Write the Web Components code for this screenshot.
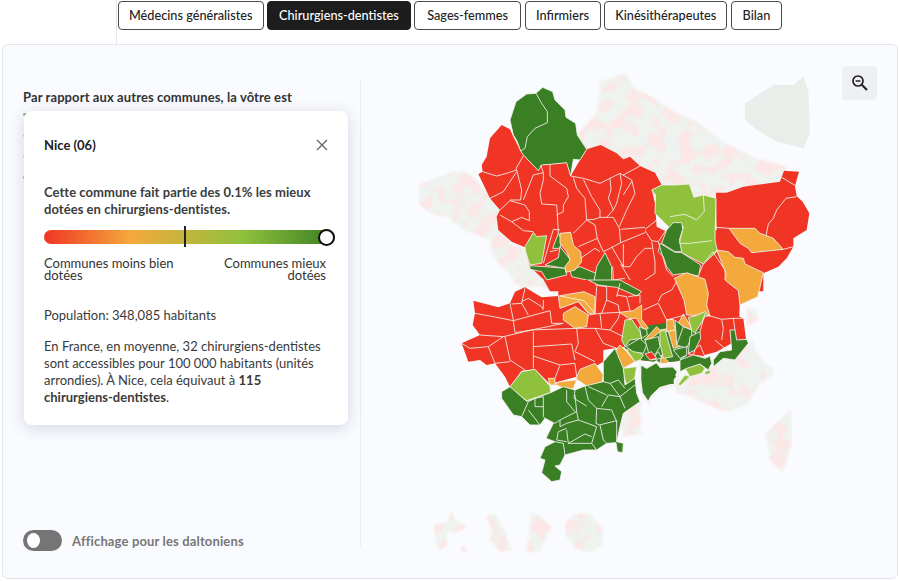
<!DOCTYPE html>
<html lang="fr"><head><meta charset="utf-8"><title>Carte</title>
<style>
html,body{margin:0;padding:0;background:#fff}
body{width:900px;height:581px;overflow:hidden;font-family:"Lato","Liberation Sans",sans-serif;color:#333}
</style></head>
<body>
<x-app></x-app>
<script>
const R='#f03524',D='#3a7f24',L='#90c13c',O='#f4a93c',W='#f1f1ee';
const upper={
 R:["275,165 300,178 310,200 332,243 340,255 385,302 395,285 470,278 482,318 510,270 530,238 572,225 620,250 640,268 660,260 690,288 735,308 755,345 725,360 735,400 740,470 800,500 920,480 918,368 950,368 1000,350 1110,335 1122,302 1167,305 1155,348 1160,378 1178,395 1198,430 1190,480 1150,505 1150,530 1130,565 1105,590 1060,610 1060,664 420,664 400,628 360,590 345,532 305,515 265,480 260,440 270,420 240,385 205,312 218,305 215,285 230,260 240,205"],
 L:["725,360 755,345 800,345 838,342 852,382 880,375 918,385 915,510 922,543 880,582 815,548 808,520 820,470 790,462 780,475 750,445 735,430 737,375","370,487 380,500 410,497 395,580 360,585 347,545 345,530"],
 D:["378,70 398,52 428,65 435,90 465,120 468,142 497,160 502,195 530,238 510,270 490,268 482,318 470,278 420,283 395,285 385,302 340,255 332,243 322,215 310,195 300,150 318,95 350,72","790,458 815,458 818,478 808,510 815,545 795,545 755,520 770,480","750,520 795,547 815,548 872,585 866,618 820,610 790,615 770,590 760,560 745,545","428,535 445,490 455,510 450,535","405,585 445,563 450,530 482,570 465,595","360,587 405,590 465,595 470,615 410,630 395,605 360,598","480,600 510,590 558,610 552,635 485,620","585,548 605,590 605,635 552,635 560,590"],
 O:["450,490 482,487 490,525 512,545 515,575 495,600 468,607 465,590 480,570 470,545 450,520","957,475 1035,475 1050,490 1090,505 1120,538 1025,548 1015,535 990,520"],
 lines:["378,70 395,100 412,125 412,158 375,175 352,200 345,235 332,243","780,440 825,433 860,450 883,425 880,375","808,520 840,520 905,512","1115,322 1158,348","1128,385 1160,380","1128,385 1100,420 1090,445 1075,462 1068,498","918,472 957,475","1120,538 1150,530","922,543 905,550 880,582 868,610","908,545 945,600 946,630 895,660",
 "218,305 260,318 290,310 320,300","340,258 318,295 320,300 335,360 332,390 300,390","240,385 280,365 320,305","270,420 300,392 345,405 358,425 358,452 335,442 305,455 270,435","305,455 340,482 370,485","340,390 360,340 370,315 400,308 400,330 390,370 395,402 440,405 442,432 445,490","420,283 420,318 470,355 475,380 460,405 460,425 440,435","392,285 400,308","482,318 520,325 570,340 600,325 630,310 665,330 675,370 650,420 628,470","490,322 500,355 525,385 530,450","520,328 545,380 570,420 570,442","600,325 603,360 595,385 610,420 590,442","630,310 635,340 620,400 610,420","640,315 690,288","665,335 640,375","490,490 530,450 555,465 562,505 505,530","530,450 552,448 570,442 610,442 628,475 632,518 600,535 580,545","562,505 580,545","512,565 555,535 570,545","632,478 705,472","705,478 738,452 767,482 745,515 725,512 705,482","632,518 705,488","605,530 640,590 660,590 680,560 705,535 725,535","640,522 640,590","725,515 735,575","632,582 660,630 690,640 735,610 735,575","745,515 770,600 790,620","690,640 685,660","608,590 610,630 645,625","450,480 430,478 400,580","443,540 420,545"]
};
const lower={
 R:["40,62 115,82 150,70 165,35 195,22 245,52 295,48 295,20 260,0 860,0 840,30 838,110 850,115 858,178 815,190 770,215 680,240 610,248 540,240 495,200 430,210 430,245 350,290 270,312 225,268 185,272 150,320 135,290 105,250 80,255 60,240 25,245 5,190 60,165 38,135 45,100"],
 B:["640,125 720,150 715,190 685,222 680,240 610,248 540,240 495,205 485,185 540,140"],
 X:["685,222 720,195 735,230 700,225"],
 O:["770,-90 805,-85 825,-68 850,-65 855,-48 910,-22 905,0 893,50 840,75 835,32 795,0 798,-20","643,-5 680,-22 735,-2 745,40 740,75 750,108 680,105 672,60","295,48 372,35 405,50 405,100 385,100 365,75 355,65 300,85","310,100 345,80 385,105 380,140 345,145 310,120","350,292 360,268 405,250 430,285 425,315 380,318 350,298","265,295 285,295 285,312 300,305 350,300 340,325 320,330 290,315 270,315","478,97 520,92 545,75 545,118 565,145 550,150 530,115 505,115","553,180 590,140 600,150 630,145 620,155 600,155 575,175","620,120 640,118 645,150 620,155","625,155 645,150 660,200 640,205","655,130 670,102 690,135 695,150 672,140","465,215 480,195 500,215 525,245 490,265","600,250 605,225 625,245 620,250"],
 L:["150,320 185,275 225,268 270,318 272,338 200,362 152,325","495,120 515,118 540,155 545,175 510,180 495,200 485,180","500,210 515,200 550,225 540,240 525,245","600,155 615,150 638,230 610,235 600,190","490,265 530,260 525,290 515,315 500,315 492,290","685,112 705,108 735,95 745,105 735,110 705,160 695,150","675,265 720,252 735,265 725,280 690,290","655,312 675,285 690,290 660,318","735,275 750,270 752,280 735,285"],
 D:["385,0 480,0 545,35 530,48 470,22 415,15","125,335 150,320 200,364 272,338 310,320 345,330 375,318 430,305 430,245 465,205 490,265 495,315 525,295 530,340 540,365 490,400 480,440 470,485 490,490 488,518 472,515 468,488 440,490 410,510 370,510 315,525 300,555 285,558 305,575 300,600 275,605 245,578 255,540 240,535 255,500 285,485 258,475 280,430 255,415 240,435 210,435 185,410 160,405 125,355","645,120 670,140 695,150 695,170 680,205 650,195 648,160","690,170 720,155 722,175 705,210 685,220","640,210 680,200 680,225 660,235","660,240 700,225 735,235 750,228 755,250 745,270 720,252 680,265 660,275","760,240 780,215 815,210 810,150 825,150 830,180 860,178 865,190 825,240 790,235 760,260","538,140 560,150 562,165 545,175","498,200 540,175 560,195 550,220 520,215","555,180 595,170 600,200 575,240 565,215","575,240 595,215 605,235"],
 lines:["150,70 160,120","45,100 100,110 160,122 270,92","155,72 185,70 205,105","185,65 205,55 245,80 250,90","195,25 185,70","250,60 250,85","270,92 275,130 310,130","160,122 165,158 215,150 310,130","5,190 30,205 85,200 130,170 60,165","130,170 215,150 350,145 355,190 345,215","135,170 150,240 195,270","85,200 95,225 105,250 150,245","220,155 220,265","220,200 335,192 345,240","220,228 300,255 345,250","300,255 285,295","345,215 405,245","345,250 350,290","405,145 430,190 470,205","350,145 405,145 450,150 490,170","450,150 475,115 480,95","385,105 420,100 425,145","420,100 478,97","405,15 440,20","410,20 405,100","440,20 440,60 425,100","440,60 475,75 478,97","470,45 500,50 510,92","470,50 480,10","505,50 540,45 540,70","550,90 595,70 620,120 675,105","595,65 605,45 635,30 650,5","735,100 720,155","740,105 785,118 820,115 850,115","785,118 790,145 785,180","820,115 825,150","765,180 800,210","300,48 372,62 405,100","355,65 385,100",
 "205,365 185,410","205,365 225,355 250,350","225,355 225,380 250,380","205,390 240,435","250,350 250,410 255,415 285,430","285,430 300,420 350,395 345,345","320,330 320,365 345,395","345,330 342,355 380,378","375,318 385,360 410,385","350,395 355,420 410,440","410,385 408,430 418,435 470,422","410,385 455,390 470,425","425,380 445,345","385,320 440,345","430,305 450,310 480,350","450,310 475,300 495,325","445,345 480,350 495,385","480,350 525,315","300,420 300,440 320,430 355,420","320,445 295,455 290,480 320,485","320,450 325,490 375,462 395,470","325,490 395,490 410,510","395,490 410,440","420,435 430,480 440,490","285,485 310,490 315,525","470,422 470,485","670,140 650,195","660,240 680,225","700,225 705,210"]
};
const colors={R,D,L,O,B:D,X:R};
const poly=(a,f,s)=>a.map(p=>`<polygon points="${p}" fill="${f}"${s?` stroke="${W}" stroke-width="${s}" stroke-linejoin="round"`:''}/>`).join('');
const group=(g,order)=>order.map(k=>poly(g[k],colors[k],(k=='R'||k=='B')?0:2.6)).join('')+g.lines.map(p=>`<polyline points="${p}" fill="none" stroke="${W}" stroke-width="2.6" stroke-linejoin="round"/>`).join('');
const pale5=["570,35 650,8 670,50 740,90 790,125 850,150 950,220 1040,265 1130,290 1115,345 1000,400 800,420 600,300 530,260 502,195 560,130 565,90","25,345 130,305 170,305 215,345 300,400 300,520 345,535 400,590 420,640 340,660 250,560 240,510 160,480 110,440 70,435 30,405"];
const alsace="1005,100 1090,45 1150,45 1180,20 1195,60 1200,190 1180,235 1100,215 1040,180 1005,150";
const pale6=["860,80 890,90 895,120 860,140","860,190 880,180 885,210 920,255 940,265 940,285 900,310 860,375 810,395 780,390 680,345 650,340 640,300 750,240 830,220","490,400 545,360 540,450 550,460 490,470 480,440","985,395 995,395 995,490 970,580 930,540 915,460","150,5 200,0 260,0 295,40 240,20 190,18"];
const paleO=["434,525 447,522 452,512 455,520 467,527 455,533 447,532 447,545 440,550 436,545","461,548 465,546 467,551 462,553","486,516 495,514 502,525 508,540 512,550 500,552 495,545 490,540 492,530","530,512 540,516 552,527 545,540 540,552 526,552 530,530","566,522 575,514 590,513 603,530 602,545 590,553 575,548 565,535"];

class XApp extends HTMLElement{constructor(){super();this.attachShadow({mode:'open'}).innerHTML=`
<style>:host{display:block;width:900px;height:581px}
header{display:grid;grid-template-columns:116px 1px 1fr;height:44px}
.rule{background:#e6e7ea}
x-tabs{margin:1px 0 0 1px}
x-panel{margin:0 2px}
</style>
<header><span></span><span class="rule"></span><x-tabs></x-tabs></header>
<x-panel></x-panel>`}}

class XTabs extends HTMLElement{constructor(){super();const t=[["Médecins généralistes",145.5],["Chirurgiens-dentistes",143.5],["Sages-femmes",106.5],["Infirmiers",76],["Kinésithérapeutes",123],["Bilan",51]];
this.attachShadow({mode:'open'}).innerHTML=`
<style>:host{display:flex;gap:3.7px;align-items:flex-start}
button{all:unset;box-sizing:border-box;height:29px;padding-bottom:1px;display:flex;align-items:center;justify-content:center;border:1px solid #4a4a4a;border-radius:4px;background:#fff;color:#222;font:500 12.7px Lato,"Liberation Sans",sans-serif;white-space:nowrap}
.on{background:#1d1d1d;color:#fff;border-color:#1d1d1d}</style>
${t.map(([n,w],i)=>`<button style="width:${w}px" class="${i==1?'on':''}">${n}</button>`).join('')}`}}

class XPanel extends HTMLElement{constructor(){super();this.attachShadow({mode:'open'}).innerHTML=`
<style>:host{display:grid;grid-template-columns:358px 1fr;position:relative;box-sizing:border-box;width:896px;height:535px;background:#fafbff;border:1px solid #e3e6ed;border-radius:6px;overflow:hidden}
.side{margin:35px 0 32px;border-right:1px solid #eaecf1;padding:10px 0 0 20px;display:flex;flex-direction:column;font:700 13px Lato,"Liberation Sans",sans-serif;color:#333}
h2{all:unset;display:block;line-height:16px;letter-spacing:.1px;margin-top:-1px}
.legend{display:flex;flex-direction:column;gap:18px;margin:8px 0 0;opacity:.55}
.legend i{display:block;width:12px;height:3px;border-radius:2px}
x-toggle{margin-top:auto;margin-bottom:-5px}
x-tooltip{position:absolute;left:21px;top:66px}
x-zoom{position:absolute;right:20px;top:21px}
</style>
<div class="side"><h2>Par rapport aux autres communes, la vôtre est</h2>
<div class="legend"><i style="background:${D}"></i><i style="background:${L}"></i><i style="background:${O}"></i><i style="background:${R}"></i></div>
<x-toggle></x-toggle></div>
<x-map></x-map><x-tooltip></x-tooltip><x-zoom></x-zoom>`}}

class XMap extends HTMLElement{constructor(){super();this.attachShadow({mode:'open'}).innerHTML=`
<style>:host{display:block}svg{display:block}</style>
<svg width="536" height="533" viewBox="361 45 536 533" aria-hidden="true">
<defs><filter id="m" x="0" y="0" width="100%" height="100%" color-interpolation-filters="sRGB">
<feTurbulence type="fractalNoise" baseFrequency=".075" numOctaves="3" seed="7" result="n"/>
<feColorMatrix in="n" values="0 0 0 0 .99  0 0 0 0 .90  0 0 0 0 .90  0 0 0 8 -3.9" result="p"/>
<feComposite in="p" in2="SourceGraphic" operator="in" result="c"/>
<feMerge result="all"><feMergeNode in="SourceGraphic"/><feMergeNode in="c"/></feMerge>
<feGaussianBlur in="all" stdDeviation=".8"/></filter></defs>
<g filter="url(#m)" fill="#eff3ef">
<g transform="translate(410 70) scale(.33333)">${pale5.map(p=>`<polygon points="${p}"/>`).join('')}</g>
<g transform="translate(460 280) scale(.33333)">${pale6.map(p=>`<polygon points="${p}"/>`).join('')}</g>
${paleO.map(p=>`<polygon points="${p}"/>`).join('')}
</g>
<g transform="translate(410 70) scale(.33333)"><polygon points="${alsace}" fill="#e9eeea"/></g>
<g transform="translate(410 70) scale(.33333)">${group(upper,['R','L','D','O'])}</g>
<g transform="translate(460 280) scale(.33333)">${group(lower,['R','B','X','O','L','D'])}
<polygon points="540,250 560,262 590,245 602,260 640,258 655,275 650,285 660,280 645,300 645,312 600,325 575,350 565,370 545,340 540,300" fill="${D}" stroke="#f3f4f2" stroke-width="8" stroke-linejoin="round"/>
<polygon points="555,222 575,215 590,235 570,240" fill="${R}" stroke="${W}" stroke-width="2.6"/></g>
</svg>`}}

class XZoom extends HTMLElement{constructor(){super();this.attachShadow({mode:'open'}).innerHTML=`
<style>:host{display:flex;align-items:center;justify-content:center;width:35px;height:34px;background:#eff0f4;border-radius:4px}</style>
<svg width="18" height="18" viewBox="0 0 18 18" fill="none" stroke="#222" stroke-width="1.7"><circle cx="7" cy="7" r="5"/><path d="M4.6 7h4.8"/><path d="M10.8 10.8 16 16" stroke-width="2.1"/></svg>`}}

class XToggle extends HTMLElement{constructor(){super();this.attachShadow({mode:'open'}).innerHTML=`
<style>:host{display:flex;align-items:center;gap:10px;font:700 13px Lato,"Liberation Sans",sans-serif;letter-spacing:.15px;color:#777}
.t{width:39px;height:21px;border-radius:11px;background:#757575;display:flex;align-items:center;padding-left:4px;box-sizing:border-box}
.k{width:13px;height:15px;border-radius:50%;background:#fff}</style>
<span class="t"><span class="k"></span></span><span>Affichage pour les daltoniens</span>`}}

class XTooltip extends HTMLElement{constructor(){super();this.attachShadow({mode:'open'}).innerHTML=`
<style>:host{display:block;box-sizing:border-box;width:324px;height:314px;background:#fff;border-radius:8px;box-shadow:0 3px 16px rgba(40,50,90,.18);padding:26px 13px 0 20px;font:400 13px/17px Lato,"Liberation Sans",sans-serif;color:#3a3a3a}
.h{display:flex;justify-content:space-between;align-items:center;height:16px;padding-right:7px;font-weight:700;color:#222}
.h svg{display:block}
.lead{margin:31px 0 0;font-weight:700;color:#3c3c3c;width:282px;letter-spacing:.05px}
x-scale{margin-top:12px}
.pop{margin:26px 0 0}
.txt{margin:14px 0 0;width:282px}
b{font-weight:700}</style>
<div class="h"><span>Nice (06)</span><svg width="12" height="12" viewBox="0 0 12 12" stroke="#666" stroke-width="1.4" fill="none"><path d="M1 1l10 10M11 1 1 11"/></svg></div>
<p class="lead">Cette commune fait partie des 0.1% les mieux dotées en chirurgiens-dentistes.</p>
<x-scale></x-scale>
<p class="pop">Population: 348,085 habitants</p>
<p class="txt">En France, en moyenne, 32 chirurgiens-dentistes sont accessibles pour 100 000 habitants (unités arrondies). À Nice, cela équivaut à&nbsp;<b>115</b><br><b>chirurgiens-dentistes</b>.</p>`}}

class XScale extends HTMLElement{constructor(){super();this.attachShadow({mode:'open'}).innerHTML=`
<style>:host{display:block;width:291px}
.bar{position:relative;height:14px;width:291px;border-radius:7px;background:linear-gradient(90deg,${R} 0,${O} 30%,${L} 68%,${D} 100%)}
.tick{position:absolute;left:140px;top:-4px;width:2px;height:21px;background:#222}
.knob{position:absolute;left:274px;top:-1.5px;box-sizing:border-box;width:17px;height:17px;border-radius:50%;background:#fff;border:2px solid #111}
.l{display:flex;justify-content:space-between;width:282px;margin-top:13px;line-height:12px;color:#333}
.l span{display:block;width:140px}.l span+span{text-align:right}</style>
<div class="bar"><i class="tick"></i><i class="knob"></i></div>
<div class="l"><span>Communes moins bien dotées</span><span>Communes mieux dotées</span></div>`}}

customElements.define('x-tabs',XTabs);customElements.define('x-zoom',XZoom);customElements.define('x-toggle',XToggle);customElements.define('x-scale',XScale);customElements.define('x-tooltip',XTooltip);customElements.define('x-map',XMap);customElements.define('x-panel',XPanel);customElements.define('x-app',XApp);
</script>
</body></html>
